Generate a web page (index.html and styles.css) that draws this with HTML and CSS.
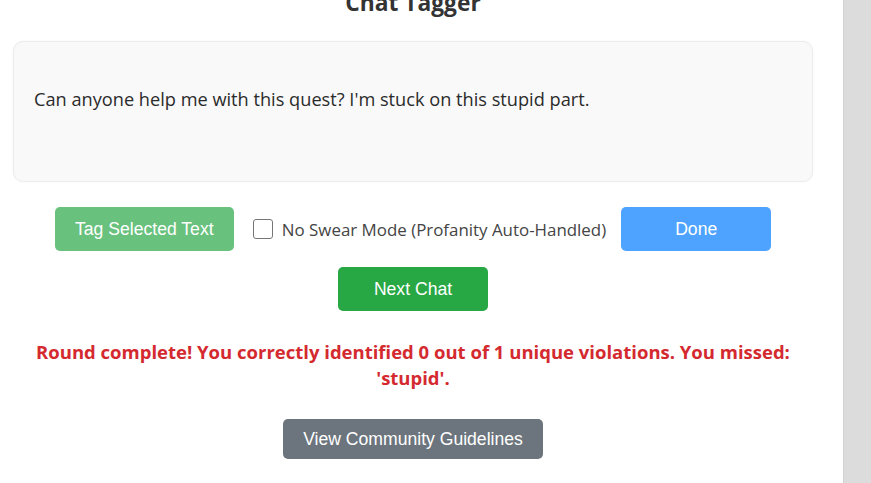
FILE: index.html
```html
<!DOCTYPE html>
<html lang="en">
<head>
<meta charset="utf-8">
<title>Chat Tagger</title>
<link rel="stylesheet" href="styles.css">
</head>
<body>
<div class="page">
  <main class="main">
    <div class="app">
      <h1 class="title">Chat Tagger</h1>
      <div class="chat-box">
        <p class="chat-text">Can anyone help me with this quest? I'm stuck on this stupid part.</p>
      </div>
      <div class="controls">
        <button class="btn btn-tag" disabled>Tag Selected Text</button>
        <label class="toggle">
          <input type="checkbox" class="check">
          <span class="toggle-label">No Swear Mode (Profanity Auto-Handled)</span>
        </label>
        <button class="btn btn-done" disabled>Done</button>
      </div>
      <div class="controls next-row">
        <button class="btn btn-next">Next Chat</button>
      </div>
      <p class="result">Round complete! You correctly identified 0 out of 1 unique violations. You missed: 'stupid'.</p>
      <div class="controls guide-row">
        <button class="btn btn-guide">View Community Guidelines</button>
      </div>
    </div>
  </main>
  <aside class="side"></aside>
</div>
</body>
</html>
```
FILE: styles.css
```css
* { box-sizing: border-box; }
html, body {
  margin: 0;
  padding: 0;
  height: 100%;
  overflow: hidden;
  background: #ffffff;
}
.page {
  display: flex;
  height: 483px;
}
.main {
  flex: 1;
  background: #ffffff;
  overflow: hidden;
}
.side {
  width: 28px;
  background: #dcdcdc;
  border-left: 1px solid #d2d2d2;
}
.app {
  width: 800px;
  margin-left: 13px;
  margin-top: -12px;
  font-family: "Open Sans", "Noto Sans", sans-serif;
  color: #333333;
}
.title {
  margin: 0;
  height: 53px;
  font-size: 22.8px;
  line-height: 30px;
  font-weight: 700;
  text-align: center;
  color: #333333;
}
.chat-box {
  height: 141px;
  background: #f9f9f9;
  border: 1px solid #ececec;
  border-radius: 10px;
  box-shadow: 0 0 3px rgba(0,0,0,0.04);
  padding: 45px 20px 0;
}
.chat-text {
  margin: 0;
  font-size: 18.2px;
  line-height: 24px;
  color: #2b2b2b;
}
.controls {
  display: flex;
  justify-content: center;
  align-items: center;
  margin-top: 25px;
}
.next-row { margin-top: 16px; }
.guide-row { margin-top: 28px; }
.btn {
  font-family: "Liberation Sans", Arial, sans-serif;
  font-size: 17.6px;
  color: #ffffff;
  border: none;
  border-radius: 5px;
  height: 44px;
  padding: 0;
  cursor: pointer;
}
.btn-tag {
  background: #69c17e;
  width: 179px;
}
.btn-done {
  background: #4da3ff;
  width: 150px;
  margin-left: 15px;
}
.btn-next {
  background: #28a745;
  width: 150px;
}
.btn-guide {
  background: #6c757d;
  height: 40px;
  width: 260px;
}
.toggle {
  display: flex;
  align-items: center;
  margin-left: 19px;
  font-size: 16.9px;
  color: #444444;
}
.check {
  appearance: none;
  -webkit-appearance: none;
  width: 20px;
  height: 20px;
  margin: 0 9px 0 0;
  border: 1px solid #767676;
  border-radius: 3px;
  background: #ffffff;
}
.toggle-label {
  white-space: nowrap;
}
.result {
  margin: 28px auto 0;
  width: 790px;
  text-align: center;
  font-size: 18.5px;
  line-height: 26px;
  font-weight: 700;
  color: #d42a2f;
}
```
